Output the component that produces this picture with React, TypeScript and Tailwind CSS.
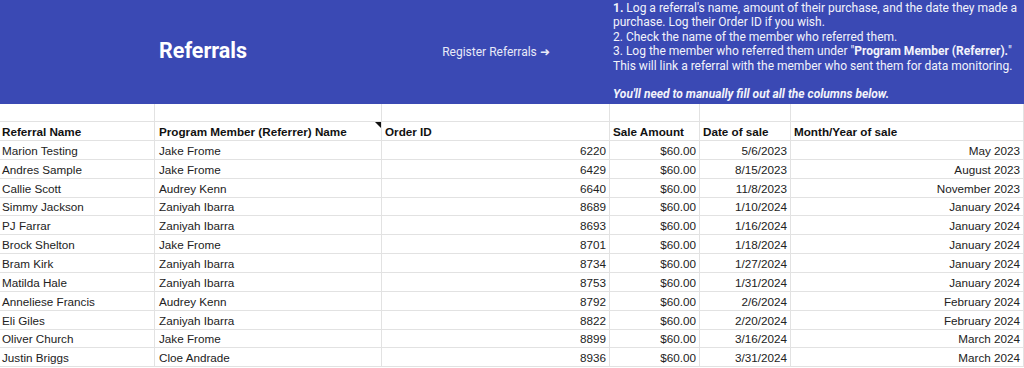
import React from "react";

const rows: [string, string, string, string, string, string, string][] = [
  ["Marion Testing", "Jake Frome", "6220", "$60.00", "5/6/2023", "May 2023", "h-[19px]"],
  ["Andres Sample", "Jake Frome", "6429", "$60.00", "8/15/2023", "August 2023", "h-[19px]"],
  ["Callie Scott", "Audrey Kenn", "6640", "$60.00", "11/8/2023", "November 2023", "h-[19px]"],
  ["Simmy Jackson", "Zaniyah Ibarra", "8689", "$60.00", "1/10/2024", "January 2024", "h-[18px]"],
  ["PJ Farrar", "Zaniyah Ibarra", "8693", "$60.00", "1/16/2024", "January 2024", "h-[19px]"],
  ["Brock Shelton", "Jake Frome", "8701", "$60.00", "1/18/2024", "January 2024", "h-[19px]"],
  ["Bram Kirk", "Zaniyah Ibarra", "8734", "$60.00", "1/27/2024", "January 2024", "h-[19px]"],
  ["Matilda Hale", "Zaniyah Ibarra", "8753", "$60.00", "1/31/2024", "January 2024", "h-[19px]"],
  ["Anneliese Francis", "Audrey Kenn", "8792", "$60.00", "2/6/2024", "February 2024", "h-[19px]"],
  ["Eli Giles", "Zaniyah Ibarra", "8822", "$60.00", "2/20/2024", "February 2024", "h-[19px]"],
  ["Oliver Church", "Jake Frome", "8899", "$60.00", "3/16/2024", "March 2024", "h-[18px]"],
  ["Justin Briggs", "Cloe Andrade", "8936", "$60.00", "3/31/2024", "March 2024", "h-[19px]"],
];

const cols = "grid grid-cols-[155px_227px_228px_90px_91px_233px]";
const cell = "border-r border-b border-[#e2e2e2] flex items-center pt-[1px] overflow-hidden whitespace-nowrap";

export default function App() {
  return (
    <div className="w-[1024px] h-[368px] overflow-hidden bg-white text-[#222] font-['Liberation_Sans',Arial,sans-serif] text-[11.7px]">
      {/* Blue banner */}
      <div className={`${cols} h-[104px] bg-[#3a49b4] text-white`}>
        <div />
        <div className="flex items-center pl-[4px] pb-[2px] font-['Roboto',sans-serif] font-bold text-[21.5px]">
          Referrals
        </div>
        <div className="flex items-center justify-center pb-[1px] font-['Roboto',sans-serif] text-[12px] text-[#e8eaf8]">
          Register Referrals ➜
        </div>
        <div className="col-span-3 pl-[3px] pt-[1px] font-['Roboto',sans-serif] text-[12px] leading-[14.4px] text-[#f2f3fb]">
          <div><span className="font-bold">1.</span> Log a referral's name, amount of their purchase, and the date they made a</div>
          <div>purchase. Log their Order ID if you wish.</div>
          <div>2. Check the name of the member who referred them.</div>
          <div>3. Log the member who referred them under "<span className="font-bold">Program Member (Referrer).</span>"</div>
          <div>This will link a referral with the member who sent them for data monitoring.</div>
          <div className="h-[14.4px]" />
          <div className="font-bold italic">You'll need to manually fill out all the columns below.</div>
        </div>
      </div>

      {/* Blank row */}
      <div className={`${cols} h-[18px]`}>
        {Array.from({ length: 6 }).map((_, i) => (
          <div key={i} className={cell} />
        ))}
      </div>

      {/* Header row */}
      <div className={`${cols} h-[19px] font-bold text-[#111]`}>
        <div className={`${cell} pl-[2px]`}>Referral Name</div>
        <div className={`${cell} pl-[4px] relative`}>
          Program Member (Referrer) Name
          <span className="absolute top-0 right-0 w-0 h-0 border-t-[6px] border-l-[6px] border-t-[#111] border-l-transparent" />
        </div>
        <div className={`${cell} pl-[3px]`}>Order ID</div>
        <div className={`${cell} pl-[3px]`}>Sale Amount</div>
        <div className={`${cell} pl-[3px]`}>Date of sale</div>
        <div className={`${cell} pl-[3px]`}>Month/Year of sale</div>
      </div>

      {/* Data rows */}
      {rows.map((r) => (
        <div key={r[0]} className={`${cols} ${r[6]}`}>
          <div className={`${cell} pl-[2px]`}>{r[0]}</div>
          <div className={`${cell} pl-[4px]`}>{r[1]}</div>
          <div className={`${cell} justify-end pr-[3px]`}>{r[2]}</div>
          <div className={`${cell} justify-end pr-[3px]`}>{r[3]}</div>
          <div className={`${cell} justify-end pr-[3px]`}>{r[4]}</div>
          <div className={`${cell} justify-end pr-[3px]`}>{r[5]}</div>
        </div>
      ))}
    </div>
  );
}
